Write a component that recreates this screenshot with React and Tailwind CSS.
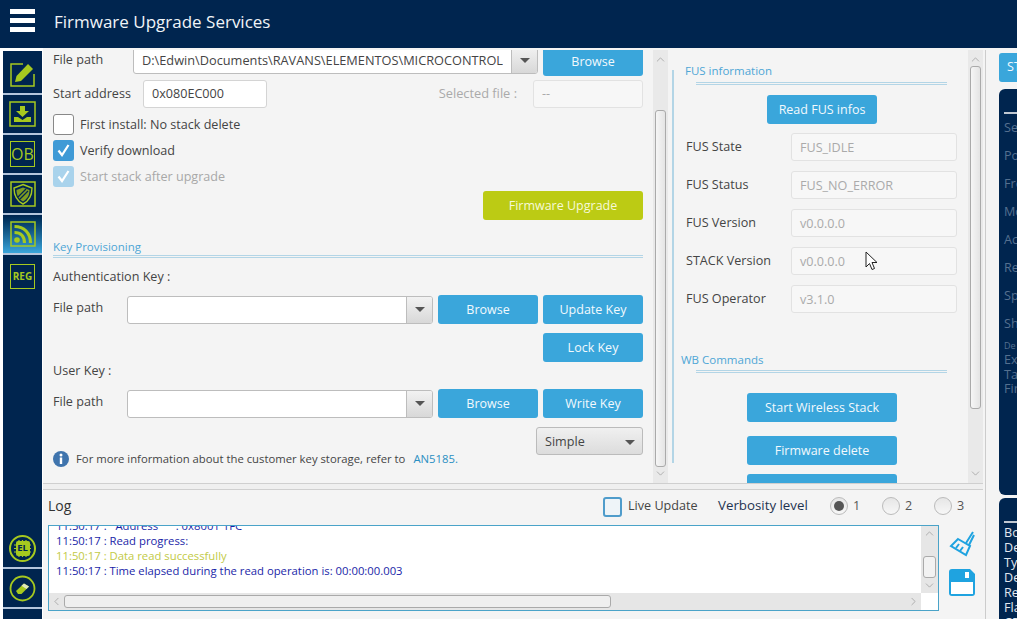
import { ChevronUp, ChevronDown, ChevronLeft, ChevronRight } from "lucide-react";

const btn = "flex items-center justify-center shrink-0 rounded-[3px] bg-[#3aa6db] pt-[2px] text-[#f2f9fd] h-[29px] text-[12.5px]";
const lime = "#a6c91f";

function Combo({ value, className }) {
  return (
    <div className={`flex h-[28px] rounded-[3px] border border-[#bdbdbd] bg-white overflow-hidden ${className}`}>
      <div className="flex-1 min-w-0 px-2">
        <div className="overflow-hidden whitespace-nowrap leading-[26px] text-[12.75px] text-[#444]">{value}</div>
      </div>
      <div className="flex w-[26px] items-center justify-center border-l border-[#bdbdbd] bg-gradient-to-b from-[#f2f2f2] to-[#d8d8d8]">
        <div className="h-0 w-0 border-x-[5px] border-t-[5px] border-x-transparent border-t-[#555]" />
      </div>
    </div>
  );
}

function Check({ checked, disabled, label, className }) {
  return (
    <div className={`flex h-[22px] items-center gap-[6px] ${className}`}>
      {checked ? (
        <div className={`flex h-[21px] w-[21px] items-center justify-center rounded-[3px] ${disabled ? "bg-[#a9d3ec]" : "bg-[#3f9ad6]"}`}>
          <svg width="15" height="15" viewBox="0 0 15 15" fill="none" stroke="white" strokeWidth="2.2">
            <path d="M2.5 7.5 L6 12 L12.5 2" />
          </svg>
        </div>
      ) : (
        <div className="h-[21px] w-[21px] rounded-[3px] border border-[#888] bg-white" />
      )}
      <span className={`pt-[2px] ${disabled ? "text-[#a8a8a8]" : "text-[#444]"}`}>{label}</span>
    </div>
  );
}

function SectionLine({ className }) {
  return <div className={`h-[3px] border-y border-[#b3d5e6] ${className}`} />;
}

function Scrollbar({ thumbTop, thumbHeight }) {
  return (
    <div className="relative flex w-[15px] shrink-0 flex-col items-center justify-between bg-[#e9e9e9] py-[3px] text-[#999]">
      <ChevronUp size={13} strokeWidth={1.3} />
      <ChevronDown size={13} strokeWidth={1.3} />
      <div
        className="absolute left-[2px] w-[11px] rounded-[3px] border border-[#aaa] bg-gradient-to-r from-[#f6f6f6] to-[#e4e4e4]"
        style={{ top: thumbTop, height: thumbHeight }}
      />
    </div>
  );
}

function FusRow({ label, value }) {
  return (
    <div className="flex h-[28px] items-center justify-between pl-[12px] pr-[11px] mb-[10px]">
      <span className="text-[#444]">{label}</span>
      <div className="h-[28px] w-[166px] rounded-[3px] border border-[#e2e2e2] bg-[#f7f7f7] pl-[8px] leading-[28px] text-[#aaa]">{value}</div>
    </div>
  );
}

function NavItem({ active, children }) {
  return (
    <div className={`flex h-[40px] items-center justify-center border-b-[2px] border-[#b5c6dc] ${active ? "bg-gradient-to-b from-[#00254f] to-[#3aa6db]" : ""}`}>
      {children}
    </div>
  );
}

function Radio({ label, on }) {
  return (
    <div className="flex w-[52px] shrink-0 items-center gap-[5px] last:w-auto">
      <div className="flex h-[18px] w-[18px] items-center justify-center rounded-full border border-[#bbb] bg-gradient-to-b from-[#e6e6e6] to-[#f7f7f7]">
        {on && <div className="h-[10px] w-[10px] rounded-full bg-[#555]" />}
      </div>
      <span className="text-[#555]">{label}</span>
    </div>
  );
}

function Sidebar() {
  return (
    <div className="ml-[3px] mt-[3px] flex w-[39px] shrink-0 flex-col bg-[#00254f]">
      <div className="h-[4px]" />
      <NavItem>
        <svg width="27" height="27" viewBox="0 0 27 27" fill="none">
          <path d="M14 3 H2 V25 H25 V13" stroke={lime} strokeWidth="1.5" />
          <path d="M6 21 L7.5 15 L19 3 L24 8 L12 20 Z" fill={lime} />
        </svg>
      </NavItem>
      <NavItem>
        <svg width="27" height="26" viewBox="0 0 27 26" fill="none">
          <rect x="1" y="1" width="25" height="24" stroke={lime} strokeWidth="1.5" />
          <path d="M11 5 H16 V10 H20 L13.5 16 L7 10 H11 Z M5 16 L9 16 L13.5 19 L18 16 H22 V21 H5 Z" fill={lime} />
        </svg>
      </NavItem>
      <NavItem>
        <div className="flex h-[26px] w-[25px] items-center justify-center border border-[#a6c91f] text-[16px] text-[#a6c91f]">OB</div>
      </NavItem>
      <NavItem>
        <svg width="26" height="26" viewBox="0 0 26 26" fill="none">
          <rect x="1" y="1" width="24" height="24" stroke={lime} strokeWidth="1.5" />
          <path d="M13 3.5 L22 7 C22 15 19 20 13 23 C7 20 4 15 4 7 Z" stroke={lime} strokeWidth="1.4" />
          <path d="M13 6.5 L19.5 9 C19.5 14 17.5 18 13 20.5 C8.5 18 6.5 14 6.5 9 Z" fill="#7f9c22" />
          <path d="M8 16 L16 8 M10 18 L18 10" stroke="#00254f" strokeWidth="1.2" />
        </svg>
      </NavItem>
      <NavItem active>
        <svg width="26" height="26" viewBox="0 0 26 26" fill="none">
          <rect x="1" y="1" width="24" height="24" stroke={lime} strokeWidth="1.5" />
          <circle cx="7" cy="19" r="2.8" fill={lime} />
          <path d="M4.5 11.5 C11 11.5 14.5 15.5 14.5 22 M4.5 5.5 C14 5.5 20.5 12 20.5 22" stroke={lime} strokeWidth="3.2" />
        </svg>
      </NavItem>
      <div className="flex h-[40px] items-center justify-center pt-[3px]">
        <div className="flex h-[25px] w-[25px] items-center justify-center border border-[#a6c91f] text-[10px] font-bold text-[#a6c91f]">REG</div>
      </div>
      <div className="flex-1" />
      <NavItem>
        <div className="relative flex h-[27px] w-[27px] items-center justify-center rounded-full border-[2px] border-[#a6c91f]">
          <svg className="absolute left-[2px] top-[2px]" width="19" height="19" viewBox="0 0 19 19" stroke={lime} strokeWidth="1.2">
            <path d="M6 1 V18 M9.5 1 V18 M13 1 V18 M1 6 H18 M1 9.5 H18 M1 13 H18" />
          </svg>
          <div className="relative flex h-[15px] w-[14px] items-center justify-center rounded-[2px] bg-[#a6c91f] text-[9.5px] font-bold leading-none text-[#00254f]">EL</div>
        </div>
      </NavItem>
      <NavItem>
        <svg width="27" height="27" viewBox="0 0 27 27" fill="none">
          <circle cx="13.5" cy="13.5" r="12" stroke={lime} strokeWidth="1.8" />
          <path d="M7 16 L15 8.5 L20 11.5 L12.5 19 L9 19 Z" fill={lime} />
          <path d="M15 8.5 L20 11.5 L17.5 14 L12.5 10.8 Z" fill="#dfe8bb" />
        </svg>
      </NavItem>
      <div className="h-[10px]" />
    </div>
  );
}

function LeftPane() {
  return (
    <div className="relative flex-1 overflow-hidden pl-[10px] pr-[10px]">
      <div className="flex h-[26px] items-start gap-[5px] mb-[4px]">
        <span className="w-[75px] text-[#444] leading-[20px]">File path</span>
        <Combo className="w-[405px] -mt-[4px]" value="D:\Edwin\Documents\RAVANS\ELEMENTOS\MICROCONTROL" />
        <div className={`${btn} w-[100px] -mt-[3px]`}>Browse</div>
      </div>
      <div className="flex h-[28px] items-center">
        <span className="w-[90px] text-[#444]">Start address</span>
        <div className="h-[28px] w-[124px] rounded-[3px] border border-[#d4d4d4] bg-white pl-[8px] leading-[26px] text-[#444]">0x080EC000</div>
        <div className="flex-1" />
        <span className="mr-[16px] text-[12.8px] text-[#aaa]">Selected file :</span>
        <div className="h-[28px] w-[110px] rounded-[3px] border border-[#e2e2e2] bg-[#f7f7f7] pl-[8px] leading-[26px] text-[#aaa]">--</div>
      </div>
      <Check className="mt-[5px]" label="First install: No stack delete" />
      <Check className="mt-[4px]" checked label="Verify download" />
      <Check className="mt-[4px]" checked disabled label="Start stack after upgrade" />
      <div className="mt-[4px] flex justify-end">
        <div className="flex h-[29px] w-[160px] items-center justify-center rounded-[3px] bg-[#bccb14] pt-[2px] text-[12.5px] text-[#f6f9d8]">Firmware Upgrade</div>
      </div>
      <div className="mt-[18px] h-[17px] leading-[17px] text-[11.5px] text-[#4ea6d6]">Key Provisioning</div>
      <SectionLine className="mt-0" />
      <div className="mt-[9px] h-[20px] leading-[20px] text-[#444]">Authentication Key :</div>
      <div className="mt-[8px] flex items-center gap-[5px]">
        <span className="-mt-[2px] w-[69px] text-[#444]">File path</span>
        <Combo className="w-[306px]" />
        <div className={`${btn} w-[100px]`}>Browse</div>
        <div className={`${btn} w-[100px]`}>Update Key</div>
      </div>
      <div className="mt-[9px] flex justify-end">
        <div className={`${btn} w-[100px]`}>Lock Key</div>
      </div>
      <div className="-mt-[1px] h-[20px] leading-[20px] text-[#444]">User Key :</div>
      <div className="mt-[8px] flex items-center gap-[5px]">
        <span className="-mt-[2px] w-[69px] text-[#444]">File path</span>
        <Combo className="w-[306px]" />
        <div className={`${btn} w-[100px]`}>Browse</div>
        <div className={`${btn} w-[100px]`}>Write Key</div>
      </div>
      <div className="mt-[9px] flex justify-end">
        <div className="flex h-[28px] w-[107px] items-center justify-between rounded-[3px] border border-[#bbb] bg-gradient-to-b from-[#f0f0f0] to-[#dcdcdc] pl-[8px] pr-[7px] pt-[2px] text-[#444]">
          Simple
          <div className="h-0 w-0 border-x-[5px] border-t-[5px] border-x-transparent border-t-[#555]" />
        </div>
      </div>
      <div className="-mt-[4px] flex items-center gap-[7px] text-[11.3px] text-[#444]">
        <svg width="16" height="16" viewBox="0 0 16 16">
          <circle cx="8" cy="8" r="8" fill="#3f74ad" />
          <circle cx="8" cy="4" r="1.5" fill="white" />
          <rect x="6.8" y="6.5" width="2.4" height="6.5" fill="white" />
        </svg>
        <span>For more information about the customer key storage, refer to</span>
        <span className="ml-[1px] text-[#2b8fc2]">AN5185.</span>
      </div>
    </div>
  );
}

function RightPane() {
  return (
    <div className="w-[300px] shrink-0 overflow-hidden">
      <div className="mt-[20px] ml-[4px] h-[393px] border-l-[2px] border-[#b3d5e6]">
        <div className="relative -top-[8px]">
          <div className="ml-[11px] h-[17px] text-[11.5px] leading-[17px] text-[#4ea6d6]">FUS information</div>
          <SectionLine className="ml-[22px] mr-[21px] mt-[3px]" />
          <div className="mt-[10px] mb-[9px] flex justify-center pl-[10px] pr-[8px]">
            <div className={`${btn} w-[110px]`}>Read FUS infos</div>
          </div>
          <FusRow label="FUS State" value="FUS_IDLE" />
          <FusRow label="FUS Status" value="FUS_NO_ERROR" />
          <FusRow label="FUS Version" value="v0.0.0.0" />
          <FusRow label="STACK Version" value="v0.0.0.0" />
          <FusRow label="FUS Operator" value="v3.1.0" />
          <div className="relative -left-[6px] mt-[38px] ml-[13px] h-[17px] text-[11.5px] leading-[17px] text-[#4ea6d6]">WB Commands</div>
          <SectionLine className="ml-[22px] mr-[21px] mt-[2px]" />
          <div className="mt-[20px] flex flex-col items-center pl-[10px] pr-[8px]">
            <div className={`${btn} w-[150px]`}>Start Wireless Stack</div>
            <div className={`${btn} mt-[14px] w-[150px]`}>Firmware delete</div>
            <div className={`${btn} mt-[9px] w-[150px]`} />
          </div>
        </div>
      </div>
    </div>
  );
}

function LogPanel() {
  return (
    <div className="min-w-0 flex-1 pl-[5px]">
      <div className="mb-[2px] flex h-[33px] items-center">
        <span className="-mt-[2px] w-[555px] shrink-0 text-[14px] text-[#333]">Log</span>
        <div className="h-[20px] w-[19px] shrink-0 rounded-[3px] border-[2px] border-[#4f9ccb] bg-[#eef4f8]" />
        <span className="ml-[6px] w-[90px] shrink-0 text-[#444]">Live Update</span>
        <span className="-mt-[1px] w-[112px] shrink-0 text-[13.3px] text-[#1e3350]">Verbosity level</span>
        <Radio label="1" on />
        <Radio label="2" />
        <Radio label="3" />
      </div>
      <div className="flex gap-[10px]">
        <div className="flex h-[86px] w-[891px] shrink-0 flex-col overflow-hidden border border-[#4aa3c8] bg-white">
          <div className="flex min-h-0 flex-1">
            <div className="flex-1 overflow-hidden pl-[7px] text-[11.3px] leading-[15px] text-[#1a1fa8]">
              <div className="-mt-[8px] whitespace-pre">11:50:17 :   Address      : 0x8001 1FC</div>
              <div>11:50:17 : Read progress:</div>
              <div className="text-[#c2ca45]">11:50:17 : Data read successfully</div>
              <div>11:50:17 : Time elapsed during the read operation is: 00:00:00.003</div>
            </div>
            <div className="relative flex w-[17px] flex-col items-center justify-between bg-[#e6e6e6] py-[1px] text-[#999]">
              <ChevronUp size={13} strokeWidth={1.3} />
              <ChevronDown size={13} strokeWidth={1.3} />
              <div className="absolute left-[2px] top-[30px] h-[22px] w-[13px] rounded-[3px] border border-[#aaa] bg-[#f2f2f2]" />
            </div>
          </div>
          <div className="flex h-[17px]">
            <div className="relative flex flex-1 items-center justify-between bg-[#e6e6e6] pl-[1px] pr-[1px] text-[#999]">
              <ChevronLeft size={13} strokeWidth={1.3} />
              <ChevronRight size={13} strokeWidth={1.3} />
              <div className="absolute left-[15px] top-[2px] h-[13px] w-[547px] rounded-[3px] border border-[#aaa] bg-[#efefef]" />
            </div>
            <div className="w-[17px] bg-white" />
          </div>
        </div>
        <div className="flex shrink-0 flex-col gap-[12px] pt-[5px]">
          <svg width="26" height="27" viewBox="0 0 26 27" fill="none" stroke="#1fa3e0" strokeWidth="2">
            <path d="M17 13 L24 2 M20 15 L25 5" />
            <path d="M9 9 L21 16 L17 25 L2 16 Z" />
            <path d="M7 18 L10 14 M11 21 L14 17" />
          </svg>
          <svg width="26" height="27" viewBox="0 0 26 27">
            <path d="M0 3 Q0 0 3 0 H21 L26 5 V24 Q26 27 23 27 H3 Q0 27 0 24 Z" fill="#1fa3e0" />
            <rect x="2" y="13" width="22" height="12" fill="white" />
            <rect x="16" y="3" width="4" height="6" fill="white" />
          </svg>
        </div>
      </div>
    </div>
  );
}

function StPanel() {
  const top = ["Se", "Po", "Fre", "Mo", "Ac", "Re", "Sp", "Sh"];
  const bottom = ["Bo", "De", "Ty", "De", "Re", "Fla", "CP"];
  return (
    <div className="ml-[2px] flex w-[32px] shrink-0 flex-col border-l border-[#ccc] pl-[13px] pt-[3px]">
      <div className="flex h-[29px] w-[40px] items-center rounded-l-[3px] bg-[#3aa6db] pl-[8px] text-[#f2f9fd]">ST</div>
      <div className="mt-[7px] h-[406px] w-[30px] rounded-l-[6px] bg-[#00254f] pl-[5px] pt-[23px] text-[#55708f]">
        <div className="h-[2px] bg-[#c0c8d2]" />
        {top.map((t, i) => (
          <div key={i} className="h-[28px] pt-[6px] leading-[16px]">{t}</div>
        ))}
        <div className="mt-[1px] text-[9px] leading-[14px]">De</div>
        <div className="leading-[14.5px]">Ex</div>
        <div className="leading-[14.5px]">Ta</div>
        <div className="leading-[14.5px]">Fir</div>
      </div>
      <div className="mt-[3px] min-h-0 flex-1 overflow-hidden rounded-tl-[6px] bg-[#00254f] pl-[5px] pt-[23px] text-[#e2e8ef]">
        <div className="mb-[2px] h-[2px] bg-[#c0c8d2]" />
        {bottom.map((t, i) => (
          <div key={i} className="leading-[15px]">{t}</div>
        ))}
      </div>
    </div>
  );
}

export default function App() {
  return (
    <div className="relative flex h-[619px] w-[1017px] flex-col overflow-hidden bg-white font-['Open_Sans',sans-serif] text-[12.6px]">
      <header className="flex h-[48px] shrink-0 items-center bg-[#00254f]">
        <div className="ml-[10px] flex w-[25px] flex-col gap-[4px] -mt-[8px]">
          <div className="h-[5px] bg-white" />
          <div className="h-[5px] bg-white" />
          <div className="h-[5px] bg-white" />
        </div>
        <h1 className="ml-[19px] -mt-[4px] text-[17px] text-[#f0f4f8]">Firmware Upgrade Services</h1>
      </header>
      <div className="flex min-h-0 flex-1">
        <Sidebar />
        <div className="ml-[1px] flex min-w-0 flex-1 bg-[#f4f4f4] pt-[2px]">
          <div className="flex w-[940px] shrink-0 flex-col">
            <div className="flex h-[433px] shrink-0">
              <LeftPane />
              <Scrollbar thumbTop={60} thumbHeight={357} />
              <RightPane />
              <Scrollbar thumbTop={16} thumbHeight={343} />
            </div>
            <div className="h-[7px] shrink-0 border-y border-[#cfcfcf] bg-[#efefef]" />
            <LogPanel />
          </div>
          <StPanel />
        </div>
      </div>
      {/* mouse pointer */}
      <svg className="absolute left-[865px] top-[251px]" width="14" height="20" viewBox="0 0 14 20">
        <path d="M1 1 V16 L4.5 12.5 L7 18.5 L9.5 17.5 L7 11.5 H12 Z" fill="white" stroke="#222" strokeWidth="1" />
      </svg>
    </div>
  );
}
